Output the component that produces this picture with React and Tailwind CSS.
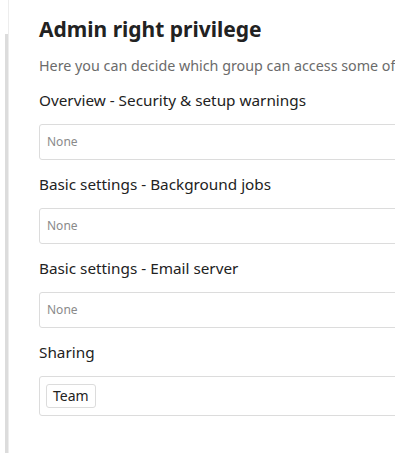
export default function App() {
  const fields = [
    { label: "Overview - Security & setup warnings", value: null },
    { label: "Basic settings - Background jobs", value: null },
    { label: "Basic settings - Email server", value: null },
    { label: "Sharing", value: "Team" },
  ];

  return (
    <div className="flex h-[453px] w-[395px] overflow-hidden bg-white font-['Noto_Sans',sans-serif] text-[#222]">
      {/* app navigation edge */}
      <div className="flex w-[9px] shrink-0 border-r border-[#ededed] pl-[5px] pt-[34px]">
        <div className="w-[3px] bg-[#dcdcdc]" />
      </div>

      <div className="w-[600px] shrink-0 pl-[30px] pt-[15px]">
        <h2 className="text-[21px] font-bold leading-[28px] text-[#222]">Admin right privilege</h2>
        <p className="mt-[13px] whitespace-nowrap text-[14.3px] leading-[20px] text-[#6b6b6b]">
          Here you can decide which group can access some of the admin settings.
        </p>

        {fields.map((f) => (
          <div key={f.label}>
            <div className="mt-[13px] text-[15.3px] leading-[22px] text-[#222]">{f.label}</div>
            {f.value ? (
              <div className="mt-[13px] flex h-[40px] items-center rounded-[3px] border border-[#dcdcdc] px-[6px]">
                <span className="rounded-[3px] border border-[#dcdcdc] px-[6px] text-[14px] leading-[22px] text-[#222]">
                  {f.value}
                </span>
              </div>
            ) : (
              <div className="mt-[13px] flex h-[36px] items-center rounded-[3px] border border-[#dcdcdc] px-[7px] text-[12px] text-[#8a8a8a]">
                None
              </div>
            )}
          </div>
        ))}
      </div>
    </div>
  );
}
